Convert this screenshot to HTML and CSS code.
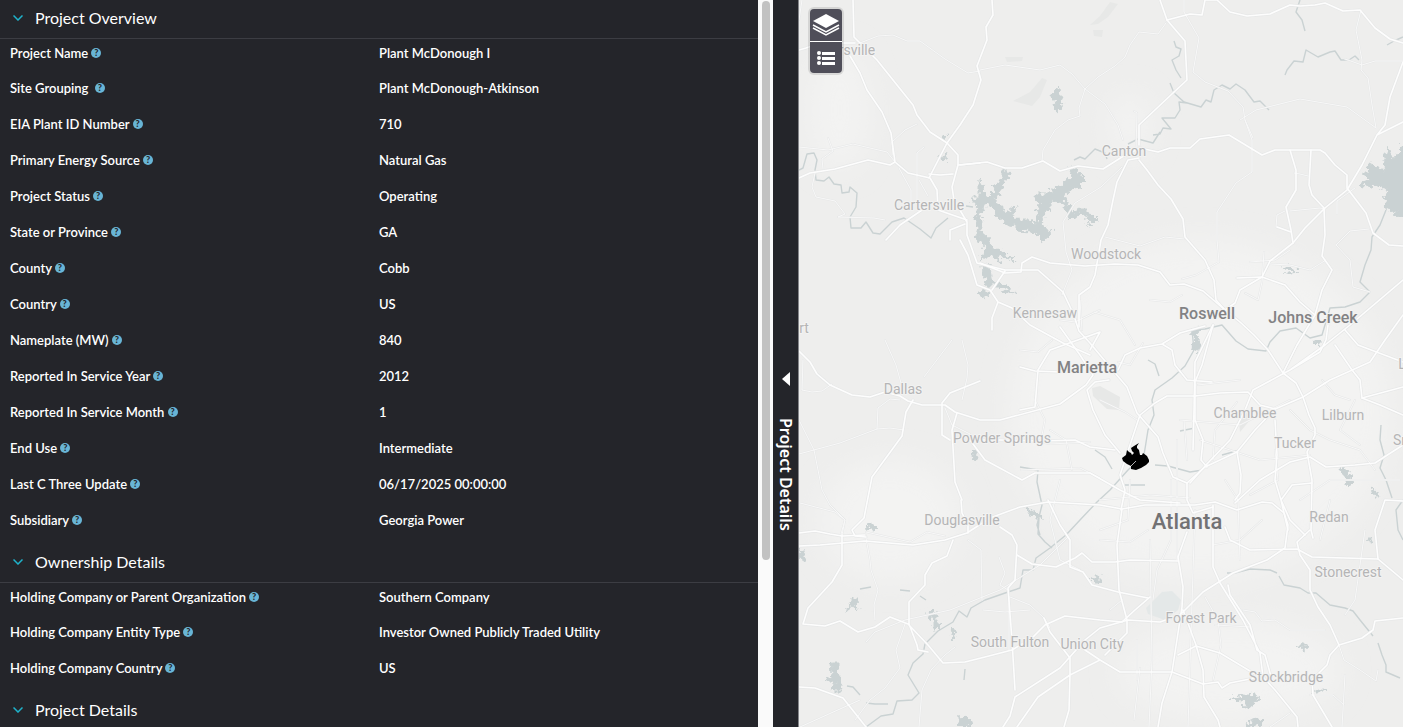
FILE: index.html
```
<!DOCTYPE html>
<html lang="en">
<head>
  <meta charset="UTF-8">
  <meta name="viewport" content="width=device-width, initial-scale=1.0">
  <title>Project Details</title>
  <link rel="stylesheet" href="styles.css">
</head>
<body>

<div class="app">

  <main class="details">
    <section>
      <h2><button type="button" aria-expanded="true"><svg class="chevron" viewBox="0 0 10 6"><path d="M0.5 0.5 5 5 9.500 0.500"/></svg>Project Overview</button></h2>
      <table>
        <tr><th scope="row">Project Name <span class="help">?</span></th><td>Plant McDonough I</td></tr>
        <tr><th scope="row">Site Grouping&nbsp; <span class="help">?</span></th><td>Plant McDonough-Atkinson</td></tr>
        <tr><th scope="row">EIA Plant ID Number <span class="help">?</span></th><td>710</td></tr>
        <tr><th scope="row">Primary Energy Source <span class="help">?</span></th><td>Natural Gas</td></tr>
        <tr><th scope="row">Project Status <span class="help">?</span></th><td>Operating</td></tr>
        <tr><th scope="row">State or Province <span class="help">?</span></th><td>GA</td></tr>
        <tr><th scope="row">County <span class="help">?</span></th><td>Cobb</td></tr>
        <tr><th scope="row">Country <span class="help">?</span></th><td>US</td></tr>
        <tr><th scope="row">Nameplate (MW) <span class="help">?</span></th><td>840</td></tr>
        <tr><th scope="row">Reported In Service Year <span class="help">?</span></th><td>2012</td></tr>
        <tr><th scope="row">Reported In Service Month <span class="help">?</span></th><td>1</td></tr>
        <tr><th scope="row">End Use <span class="help">?</span></th><td>Intermediate</td></tr>
        <tr><th scope="row">Last C Three Update <span class="help">?</span></th><td>06/17/2025 00:00:00</td></tr>
        <tr><th scope="row">Subsidiary <span class="help">?</span></th><td>Georgia Power</td></tr>
      </table>
    </section>

    <section>
      <h2><button type="button" aria-expanded="true"><svg class="chevron" viewBox="0 0 10 6"><path d="M0.5 0.5 5 5 9.500 0.500"/></svg>Ownership Details</button></h2>
      <table>
        <tr><th scope="row">Holding Company or Parent Organization <span class="help">?</span></th><td>Southern Company</td></tr>
        <tr><th scope="row">Holding Company Entity Type <span class="help">?</span></th><td>Investor Owned Publicly Traded Utility</td></tr>
        <tr><th scope="row">Holding Company Country <span class="help">?</span></th><td>US</td></tr>
      </table>
    </section>

    <section>
      <h2><button type="button" aria-expanded="true"><svg class="chevron" viewBox="0 0 10 6"><path d="M0.5 0.5 5 5 9.500 0.500"/></svg>Project Details</button></h2>
    </section>
  </main>

  <div class="scrollbar"><div class="thumb"></div></div>

  <button class="drawer-tab" type="button">
    <svg class="arrow" viewBox="0 0 8 14"><path d="M8 0v14L0 7z"/></svg>
    <span>Project Details</span>
  </button>

  <div class="map">
    <svg class="basemap" viewBox="799 0 604 727" preserveAspectRatio="xMidYMid slice">
      <defs>
        <filter id="soft" x="-20%" y="-20%" width="140%" height="140%"><feGaussianBlur stdDeviation="14"/></filter>
        <!-- roughens the lake shores -->
        <filter id="shore" filterUnits="userSpaceOnUse" x="799" y="0" width="604" height="727">
          <feTurbulence type="fractalNoise" baseFrequency="0.22" numOctaves="2" seed="4"/>
          <feDisplacementMap in="SourceGraphic" scale="11" xChannelSelector="R" yChannelSelector="G"/>
        </filter>

        <g id="minor">
          <path d="M799 147 828 150 853 144 887 152 895 162M828 138 833 151 822 159 823 169M815 173 812 187 816 197 835 201 845 214 838 217 874 218 885 220M893 155 892 142 905 130 917 124M899 168 911 190 911 201M917 200 917 153 924 147M919 180 928 196"/>
          <path d="M860 43 878 36 893 35 907 41 920 41 945 59 968 73 980 71M799 20 802 0"/>
          <path d="M980 70 1005 65 1040 70 1060 65 1072 74 1085 89 1105 104 1118 125 1123 140M1085 89 1098 77 1115 66 1125 57 1130 45 1139 32 1158 34 1166 23M1085 89 1079 108 1080 116 1068 120 1055 130 1043 150 1042 161M1184 0 1184 12 1199 38 1193 72 1205 82 1228 91 1243 107 1245 120 1253 138M1361 10 1356 30 1362 60 1361 70 1368 78 1372 105 1376 128M1403 61 1375 61 1362 65 1345 59M1240 120 1256 110 1300 99 1347 107 1376 128M1134 111 1137 113 1136 150M1122 167 1101 187 1075 203 1063 222 1066 252 1072 270 1062 295"/>
          <path d="M1245 120 1252 140 1252 172 1236 183 1217 212 1217 240 1219 262 1196 275 1182 279M1294 173 1300 174 1308 176M1290 211 1320 208 1325 209M1276 227 1277 215 1285 211M1337 214 1337 201 1355 188M1336 245 1350 231 1369 229M1336 245 1350 260 1353 287 1370 292M1264 252 1262 282 1258 300 1245 293M1250 262 1275 260 1290 250M1270 264 1290 265 1310 270 1326 260M1150 300 1170 302 1182 295M1105 237 1140 246 1165 237 1184 239"/>
          <path d="M885 340 896 365 901 383M952 340 924 377M962 340 968 365 967 378 962 400M803 360 802 390 812 392 822 391 832 384M799 454 840 443 877 429 890 428 904 430M877 429 878 408 890 399 900 400M799 420 814 450 822 490 830 505 845 520 842 535M945 408 952 425 970 434M1020 350 1038 352 1052 340"/>
          <path d="M800 503 835 512 845 520 841 534M866 538 870 560 871 570 878 590 874 605 875 620M866 532 910 542 927 532 945 536M968 540 981 550 982 600M999 557 1005 573 1000 585 1008 590M866 642 875 632 905 620 950 610 1000 590 1040 565 1068 537M905 624 896 650 900 668 885 688 870 700 855 720M800 727 860 700M1009 597 1009 650M1010 597 1030 605 1044 618 1050 628M983 610 1005 612 1030 610M955 647 945 655 931 670 922 690 919 727"/>
          <path d="M1150 540 1152 660 1149 727M1177 500 1177 560M1171 480 1171 540 1157 570 1153 600M1140 668 1134 720M1137 640 1137 680M1100 540 1130 542 1148 530M1110 610 1122 600M1243 610 1255 612 1262 621 1275 620 1290 630 1325 630M1215 625 1250 627M1205 597 1218 620 1221 645 1213 680M1345 675 1342 727M1339 645 1344 660 1360 670 1376 681 1378 670M1310 695 1333 695 1344 705M1290 713 1270 727M1365 530 1355 600 1345 615M1320 540 1330 500M1195 510 1188 727"/>
          <path d="M1035 400 1045 420 1040 445M1021 470 1080 468 1100 478M1050 430 1066 440 1072 470M1100 400 1125 412 1137 420M1143 343 1130 365 1118 362M1060 320 1075 322 1100 310M1080 300 1082 330M1094 312 1120 320 1135 345M1180 420 1240 425 1290 400M1198 385 1240 380M1237 402 1215 430 1213 460M1322 380 1335 395 1350 400M1200 440 1260 460 1310 455M1275 450 1278 480 1250 495M1300 500 1330 480 1400 480M1225 480 1238 500 1240 560M1262 520 1240 540 1213 545M1290 410 1310 430 1330 440 1360 450 1375 470M1355 400 1340 430 1360 445"/>
          <path d="M1100 500 1150 495 1190 498M1177 440 1177 500M1184 420 1187 460M1060 480 1050 520 1060 560 1080 570M1130 480 1128 520 1100 530M1020 435 1030 440 1050 444 1090 442"/>
        </g>

        <g id="major">
          <path d="M853 0 854 37 860 43 877 60 913 105 917 115 930 132 947 143 958 155 958 165 952 187 954 200 967 222 967 235 977 263 1005 270 1038 270 1063 292 1073 313 1079 331 1090 343 1110 367 1127 387 1137 413 1158 437 1163 453 1173 477 1187 483 1187 500 1193 513 1213 507"/>
          <path d="M799 50 806 48 820 43 855 43M850 56 860 73 867 90 882 112 891 133 895 162M799 178 810 173 835 169 868 160 890 165 895 162 908 173 930 178 937 190 938 210 967 220"/>
          <path d="M992 0 993 15 986 27 987 40 977 66 981 80 973 105 960 125 947 143 929 178M929 174 940 175 953 174M958 165 980 163M886 240 900 225 925 208M950 240 950 230 965 224"/>
          <path d="M960 165 987 162 1005 168 1022 168 1043 161 1060 171 1078 166 1103 169 1122 157 1140 148 1158 152 1170 148 1190 148 1200 139 1229 135 1262 155 1275 150 1320 150 1325 153 1335 165 1347 175 1347 188 1366 213 1373 233 1389 245 1403 246"/>
          <path d="M1160 0 1167 20 1185 41 1187 80 1173 93 1139 125 1139 145M1139 158 1128 160 1117 182 1113 200 1108 225 1101 240 1095 275 1090 287 1079 295 1079 327M1139 160 1147 170 1158 185 1171 199 1183 219 1185 237 1205 260 1214 280 1216 300 1225 310 1240 322 1254 335 1268 350 1283 373 1296 383 1303 397 1309 415 1315 428 1315 435 1307 452 1312 480 1311 530 1313 538"/>
          <path d="M1167 20 1190 14 1202 15 1205 0 1217 0 1230 12 1247 16 1270 14 1290 5 1300 6 1315 5 1325 3 1343 11 1360 10 1375 28 1390 39 1403 43"/>
          <path d="M1403 62 1390 97 1385 125 1377 135 1362 165 1347 190 1325 208 1305 228 1293 243 1270 261 1262 277 1240 290 1235 303 1225 310M1377 135 1403 122"/>
          <path d="M1290 150 1296 170 1296 190 1286 207 1291 230 1293 243M1277 227 1291 232M1311 150 1309 185 1312 195 1324 208 1325 235 1322 256 1332 270 1322 290 1315 315 1297 345 1283 373"/>
          <path d="M980 263 1005 273 1021 272 1022 263 1032 257 1050 263 1085 266 1115 264 1138 265 1160 272 1170 285 1184 284 1203 291 1225 310M1237 278 1262 277 1285 285 1300 302 1315 315"/>
          <path d="M960 240 968 255 977 285 990 290 998 302 1012 308 1030 325 1063 343 1090 355M998 302 992 318 992 330M1005 271 992 290"/>
          <path d="M799 351 810 362 817 374 830 385 852 395 870 397 885 392 900 396 908 401 922 405 945 405 955 412 980 420 1000 420 1060 404 1086 385 1093 375 1080 355 1060 327M942 420 942 403 950 393 980 381M942 420 942 435 950 440M957 413 952 430 955 482 962 500M913 400 906 412 902 436 872 477 864 518 852 530 855 536 866 537"/>
          <path d="M799 533 815 531 830 534 842 536 865 535M799 546 820 545 865 541 913 545 945 540 967 533 990 518 1020 507 1048 502 1100 505 1122 509 1145 505 1195 505 1215 502 1237 510 1262 502 1272 503 1284 513 1288 525 1285 548 1267 560 1233 573 1203 592 1180 615 1160 622 1128 620 1100 628 1085 640 1060 668 1015 697 1010 716 1003 727"/>
          <path d="M842 535 842 565 832 582 808 608 803 624 825 626 840 621 858 632 875 627 890 617 908 624 928 645 943 663 965 662 985 657 1012 650 1032 638 1045 625 1065 616 1100 620 1122 622 1135 610 1150 597M953 540 947 556 932 563 925 575 925 585 909 602 909 624 917 645 918 650 928 652"/>
          <path d="M961 500 962 513 968 525 968 533M1000 527 1012 535 1017 545 1015 580 1008 588 1012 640 1015 690M1017 555 1032 564 1056 567 1075 558 1082 553 1092 562 1115 562 1130 560 1178 561M1048 500 1060 525 1070 540 1070 567 1083 572 1092 585 1118 592 1148 598"/>
          <path d="M1044 618 1050 632 1070 658 1070 675 1069 710 1064 727M1100 660 1070 675 1038 697 1017 727M1085 650 1100 660 1120 672 1172 672 1203 684 1218 682 1222 688 1230 683 1255 678"/>
          <path d="M1122 509 1117 545 1119 590 1127 620 1127 633 1105 655M1187 532 1178 557 1183 587 1182 607 1172 672 1162 703 1158 727M1183 610 1196 645 1203 670 1204 697 1218 720 1220 727M1178 655 1196 646 1220 653 1240 665 1255 674"/>
          <path d="M1213 505 1213 567 1220 583 1243 620 1260 653 1263 677 1275 690 1297 717 1298 727M1225 527 1230 540 1250 550 1297 549 1312 557 1378 559 1403 580M1228 585 1230 595 1250 625 1257 650 1265 655 1272 680"/>
          <path d="M1310 530 1297 542 1300 555 1310 570 1310 590 1318 607 1330 625 1339 645 1330 655 1327 665 1312 680 1313 695 1332 727M1339 645 1362 638 1373 630 1375 621 1403 618M1378 559 1375 530 1385 500 1403 501"/>
          <path d="M1090 350 1100 332 1050 350 1038 370 1035 407 1020 410M1020 367 1035 371 1060 372M1118 370 1125 355 1140 348 1162 344 1180 333 1205 326M1162 344 1172 350 1175 365 1187 380 1212 382M1213 325 1202 365 1195 382 1195 420 1203 440 1201 460 1207 467"/>
          <path d="M1213 325 1195 362 1194 410 1193 450M1206 465 1190 483M1109 380 1095 382 1087 390 1093 410 1105 435 1120 453M1140 415 1155 403 1167 396 1195 396 1220 393 1248 392 1260 405 1275 409M1140 415 1130 445 1120 475 1125 490 1121 510"/>
          <path d="M980 440 1000 440 1040 441 1075 440 1090 447 1115 450M970 440 985 460 1022 480 1035 473 1090 473 1120 490 1140 500 1180 503"/>
          <path d="M1187 483 1205 467 1237 452 1255 430 1275 409 1303 397 1330 380 1370 362 1385 340 1403 315M1206 465 1230 440 1245 410 1253 390 1290 370 1320 352 1326 340 1328 325M1290 370 1325 345 1350 325 1403 280M1345 330 1358 345 1403 362M1335 345 1352 370 1360 380 1362 398 1380 405 1403 415"/>
          <path d="M1237 452 1241 475 1240 493 1235 500M1235 503 1260 480 1290 462 1310 457 1326 467 1355 465 1375 463 1403 445M1362 398 1403 387M1275 420 1277 455 1275 480 1281 500 1288 530M1281 500 1292 485 1312 483M1281 500 1290 520 1305 535"/>
          <path d="M799 687 815 688 843 698 866 727"/>
        </g>
      </defs>

      <rect class="land" x="799" y="0" width="604" height="727"/>
      <g class="patches" filter="url(#soft)">
        <ellipse cx="1200" cy="410" rx="190" ry="170"/>
        <ellipse cx="840" cy="110" rx="30" ry="60"/>
        <ellipse cx="890" cy="520" rx="70" ry="60"/>
        <ellipse cx="1130" cy="125" rx="20" ry="30"/>
        <ellipse cx="1230" cy="670" rx="110" ry="50"/>
      </g>
      <g class="shade">
        <path d="M1110 2 1118 4 1108 17 1098 24 1090 25 1100 16ZM1093 30 1103 30 1102 37 1094 36ZM1013 101 1030 92 1042 78 1047 80 1040 97 1032 106ZM1005 57 1023 57 1022 61 1007 62Z"/>
        <path d="M1092 388 1100 386 1120 397 1119 410 1107 409 1093 396ZM1239 422 1247 412 1250 420 1240 432Z"/>
        <path class="park" d="M1146 608 1162 592 1172 591 1181 600 1178 610 1165 620 1148 614Z"/>
      </g>

      <g class="water" filter="url(#shore)">
        <path d="M1057 90 1060 86 1061 97 1063 104 1059 111 1055 110 1054 102 1051 95ZM942 138 947 135 945 141 941 142ZM941 157 949 153 946 159 941 161Z"/>
        <path d="M979 179 983 186 984 193 989 197 994 192 993 184 999 183 1003 177 1003 171 1007 169 1009 177 1003 182 1000 190 1001 195 994 199 1000 206 1007 212 1011 207 1016 208 1013 216 1021 220 1030 220 1035 223 1038 216 1037 209 1041 204 1035 200 1037 194 1047 194 1055 187 1062 185 1071 175 1069 168 1075 170 1080 174 1085 181 1079 187 1070 189 1064 198 1069 206 1073 213 1080 209 1086 209 1090 214 1098 222 1092 221 1084 215 1077 216 1070 219 1063 204 1058 200 1050 203 1050 210 1045 213 1042 224 1048 232 1054 227 1050 235 1043 241 1040 236 1030 232 1018 231 1014 224 1009 226 1003 221 997 216 991 206 986 203 983 209 979 216 984 222 981 231 988 237 992 248 1001 250 1012 258 1014 261 1002 256 996 256 999 262 990 256 979 261 984 253 986 244 975 238 978 228 975 219 978 207 970 198 979 198 979 190Z"/>
        <path d="M983 265 990 266 992 276 993 283 1008 286 1014 293 1006 291 998 286 987 286 984 276ZM980 292 989 292 986 298 979 296ZM1088 223 1091 224 1090 226 1087 225Z"/>
        <path d="M1403 143 1395 158 1388 149 1385 158 1384 171 1372 164 1366 167 1372 173 1364 173 1368 180 1358 184 1364 187 1375 185 1384 190 1388 189 1385 201 1386 209 1396 214 1410 217 1410 143Z"/>
        <path d="M1283 267 1291 267 1292 270 1299 271 1291 273 1285 271ZM1314 340 1320 340 1320 347 1316 343ZM1340 467 1347 470 1350 475 1353 485 1348 487 1346 480ZM1371 488 1377 492 1378 498 1373 494ZM1192 329 1200 328 1197 336 1202 347 1195 353 1192 347 1194 337Z"/>
        <path d="M1026 508 1036 511 1042 517 1033 517ZM866 527 871 523 877 527 873 530ZM799 550 803 549 806 560 800 561ZM852 599 857 599 858 611 854 605 846 612 848 604 852 606ZM928 612 936 613 936 621 941 625 934 630 934 622ZM953 630 956 632 954 639 951 635ZM1091 579 1100 577 1100 583 1095 583Z"/>
        <path d="M831 662 838 662 838 672 841 680 843 690 832 690 836 684 825 678 832 676ZM958 718 968 717 973 721 971 727 960 726ZM1231 697 1246 695 1256 694 1259 700 1249 708 1243 706 1248 702 1233 700ZM1248 723 1262 718 1261 725 1249 727ZM1297 646 1302 646 1306 643 1305 650 1301 648ZM1312 692 1320 689 1327 690 1317 694ZM971 453 974 450 979 460 973 459ZM1367 540 1371 538 1371 543Z"/>
      </g>

      <g class="river">
        <path d="M799 170 803 168 807 154 814 153 817 160 815 170 816 180 824 181 829 177 834 184 841 185 842 193 849 192 850 187 857 193 856 207 850 217 851 228 861 228 866 222 873 233 880 234 892 222 904 218 920 229 931 238 936 228 948 218"/>
        <path d="M1174 41 1176 47 1181 49 1179 56 1172 60 1176 70 1181 78M1170 83 1174 93 1184 102 1201 107 1206 100 1211 102 1214 90 1222 85 1230 89 1236 84 1245 90 1254 102 1260 101 1269 110M1187 103 1179 102 1180 110 1175 118 1162 118 1171 129 1163 128 1160 134 1153 135M1074 160 1080 157 1085 159 1095 149 1105 153 1107 159M1128 144 1138 139 1153 143 1160 132M966 206 973 207"/>
        <path d="M1300 0 1296 12 1302 20 1305 31M1285 75 1287 70 1294 61 1303 62 1306 50 1318 57 1330 52 1335 51 1341 60 1349 60 1355 56 1359 60M1387 45 1394 41 1403 37"/>
        <path d="M1386 210 1380 225 1372 237 1371 250 1365 265 1360 282 1370 292 1360 302 1345 307 1330 308 1322 335 1310 338 1296 328 1280 331 1270 342 1266 351 1248 349 1236 341 1222 325 1205 329 1192 330 1194 350 1185 366 1172 378 1155 390 1152 400 1154 415 1148 430 1144 455 1128 470 1110 490 1097 502 1080 520 1066 535 1050 548 1036 558 1033 570 1023 570 1020 588 1008 592 985 600 971 608 967 617 959 611 953 622 938 631 925 644 923 654 913 663 908 675 919 693 912 700 897 701 893 714 881 716 866 727"/>
        <path d="M1148 360 1155 364 1159 376M1095 450 1105 457 1112 469M1125 485 1145 485M1155 465 1168 466 1190 472 1203 470M1222 455 1240 450M1180 431 1195 428M847 686 853 687 860 695M866 703 875 704 888 704M860 589 871 587M900 590 910 591M920 596 926 600M964 680 965 669M1020 467 1038 470 1037 482 1042 505 1037 525 1040 535M1039 518 1038 534 1045 542 1052 548M1227 573 1235 573 1250 569 1270 570 1277 573M1279 576 1284 585 1300 588 1308 593 1316 593 1330 605 1345 608 1353 611 1360 620 1373 636M1378 643 1382 655 1386 665 1386 672 1400 678M1381 425 1380 440 1384 455 1380 468 1386 480 1392 498M1403 500 1396 510 1398 530 1403 540"/>
      </g>

      <use href="#minor" class="casing minor"/>
      <use href="#major" class="casing"/>
      <use href="#minor" class="road minor"/>
      <use href="#major" class="road"/>

      <g class="places">
        <text x="857" y="55">rsville</text>
        <text x="1124" y="156">Canton</text>
        <text x="929" y="210">Cartersville</text>
        <text x="1106" y="259">Woodstock</text>
        <text x="1045" y="318">Kennesaw</text>
        <text x="804" y="333">rt</text>
        <text x="903" y="394">Dallas</text>
        <text x="1002" y="443">Powder Springs</text>
        <text x="962" y="525">Douglasville</text>
        <text x="1010" y="647">South Fulton</text>
        <text x="1092" y="649">Union City</text>
        <text x="1201" y="623">Forest Park</text>
        <text x="1286" y="682">Stockbridge</text>
        <text x="1348" y="577">Stonecrest</text>
        <text x="1329" y="522">Redan</text>
        <text x="1295" y="448">Tucker</text>
        <text x="1245" y="418">Chamblee</text>
        <text x="1343" y="420">Lilburn</text>
        <text x="1401" y="445">Sn</text>
        <text x="1402" y="369">L</text>
        <text class="town" x="1207" y="319">Roswell</text>
        <text class="town" x="1313" y="323">Johns Creek</text>
        <text class="town" x="1087" y="373">Marietta</text>
        <text class="city" x="1187" y="529">Atlanta</text>
      </g>

      <!-- natural gas plant marker -->
      <path class="plant" d="M1127 450 1129 452 1131 453 1132 455 1134 453 1132 451 1131 448 1134 446 1139 443 1137 446 1137 448 1139 450 1140 455 1142 455 1143 453 1147 456 1149 460 1149 462 1146 465 1141 468 1136 470 1131 469 1131 466 1127 464 1123 461 1122 458 1126 455Z"/>
      <path class="spark" d="M1130 467 1132 465 1136 461"/>
    </svg>

    <div class="map-tools">
      <button type="button" aria-label="Layers">
        <svg width="28" height="24" viewBox="0 0 28 24"><path d="M14 1 27 8 14 15 1 8z"/><path class="sheet" d="M1 12 14 19 27 12M1 15 14 22 27 15"/></svg>
      </button>
      <button type="button" aria-label="Legend">
        <svg width="20" height="16" viewBox="0 0 20 16"><circle cx="3" cy="3" r="2"/><circle cx="3" cy="8" r="2"/><circle cx="3" cy="13" r="2"/><path d="M6 2h13v3H6zM6 7h13v3H6zM6 12h13v3H6z"/></svg>
      </button>
    </div>
  </div>

</div>

</body>
</html>
```

FILE: styles.css
```
* {
  margin: 0;
  padding: 0;
  box-sizing: border-box;
}

html, body {
  height: 100%;
  overflow: hidden;
}

body {
  font-family: Lato, sans-serif;
  font-size: 13px;
  background: #24252a;
  color: #fff;
}

button {
  font: inherit;
  color: inherit;
  background: none;
  border: none;
  cursor: pointer;
}

.app {
  display: flex;
  height: 100vh;
}

/* Details panel */
.details {
  flex: 758 1 0;
  min-width: 0;
  overflow: hidden;
}

.details section {
  margin-bottom: 2px;
}

.details h2 {
  font-size: 16px;
  font-weight: 400;
  border-bottom: 1px solid #3c3d43;
}

.details h2 button {
  display: flex;
  align-items: center;
  width: 100%;
  height: 38px;
  padding: 0 0 3px 13px;
  gap: 12px;
  text-align: left;
}

.chevron {
  width: 10px;
  height: 6px;
  fill: none;
  stroke: #1fb3cb;
  stroke-width: 1.5;
}

table {
  width: 100%;
  table-layout: fixed;
  border-collapse: collapse;
}

th, td {
  width: 50%;
  padding: 4px 0 12px;
  line-height: 20px;
  font-weight: 600;
  text-align: left;
  vertical-align: top;
}

th {
  padding-left: 10px;
}

tr:first-child th,
tr:first-child td {
  padding-bottom: 11px;
}

.help {
  display: inline-block;
  width: 10px;
  height: 10px;
  border-radius: 50%;
  background: #68b5d6;
  color: #24252a;
  font-size: 9px;
  font-weight: 900;
  line-height: 10px;
  text-align: center;
  vertical-align: 2px;
}

.scrollbar {
  flex: 0 0 15px;
  padding: 1px 3px 0 4px;
  background: #fafafa;
}

.thumb {
  width: 8px;
  height: 77%;
  border-radius: 4px;
  background: #c2c2c2;
}

/* Tab that folds the panel away */
.drawer-tab {
  flex: 0 0 26px;
  display: flex;
  flex-direction: column;
  align-items: center;
  justify-content: center;
  gap: 32px;
  padding-top: 175px;
  border-right: 1px solid #85868a;
  font-family: "Noto Sans", sans-serif;
  font-size: 16px;
  font-weight: 600;
}

.drawer-tab span {
  writing-mode: vertical-rl;
  line-height: 24px;
}

.arrow {
  width: 8px;
  height: 14px;
  fill: #fff;
}

/* Map */
.map {
  flex: 604 1 0;
  min-width: 0;
  position: relative;
  overflow: hidden;
  background: #efefee;
}

.basemap {
  display: block;
  width: 100%;
  height: 100%;
}

.land {
  fill: #eeeeed;
}

.patches {
  fill: #f3f3f2;
}

.shade {
  fill: #e7e8e7;
}

.park {
  fill: #e4e8e8;
}

.water {
  fill: #cad2d3;
  stroke: #cad2d3;
  stroke-width: 1;
}

.river {
  fill: none;
  stroke: #cad2d3;
  stroke-width: 1.4;
  stroke-linejoin: round;
}

.casing,
.road {
  fill: none;
  stroke-linejoin: round;
  stroke-linecap: round;
}

.casing {
  stroke: #e7e8e8;
  stroke-width: 3;
}

.road {
  stroke: #fdfdfd;
  stroke-width: 1.6;
}

.casing.minor {
  stroke-width: 2;
}

.road.minor {
  stroke: #f8f8f8;
  stroke-width: 1;
}

.places {
  font-family: Roboto, sans-serif;
  font-size: 14px;
  text-anchor: middle;
  fill: #b5b5b6;
  stroke: #f3f3f2;
  stroke-width: 2px;
  stroke-linejoin: round;
  paint-order: stroke;
}

.places .town {
  font-size: 16px;
  font-weight: 500;
  fill: #828284;
}

.places .city {
  font-size: 22px;
  font-weight: 500;
  fill: #727274;
}

.spark {
  stroke: #fff;
  stroke-width: 0.7;
}

.map-tools {
  position: absolute;
  top: 9px;
  left: 11px;
  width: 32px;
  border-radius: 4px;
  background: #4f4e59;
  box-shadow: 0 0 0 2px rgba(0, 0, 0, 0.1);
}

.map-tools button {
  display: flex;
  align-items: center;
  justify-content: center;
  width: 100%;
  height: 32px;
}

.map-tools button + button {
  border-top: 1px solid #fff;
}

.map-tools svg {
  fill: #fff;
}

.map-tools .sheet {
  fill: none;
  stroke: #fff;
  stroke-width: 1.5;
}
```
